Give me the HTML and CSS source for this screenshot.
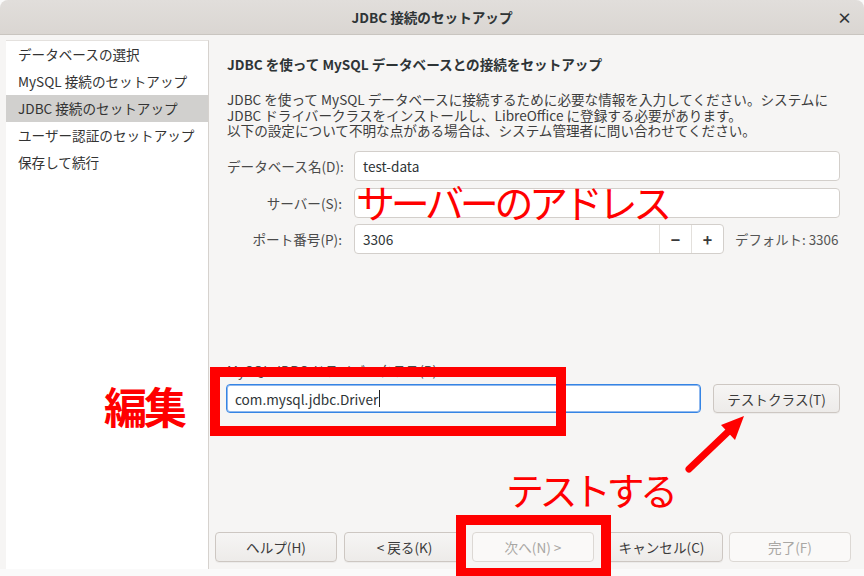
FILE: index.html
```html
<!DOCTYPE html>
<html lang="ja">
<head>
<meta charset="utf-8">
<title>JDBC 接続のセットアップ</title>
<link rel="stylesheet" href="styles.css">
</head>
<body>
<div class="window">
  <header class="titlebar">
    <span></span>
    <span class="title">JDBC 接続のセットアップ</span>
    <span class="close">×</span>
  </header>
  <div class="body">
    <nav class="sidebar">
      <div class="step">データベースの選択</div>
      <div class="step">MySQL 接続のセットアップ</div>
      <div class="step active">JDBC 接続のセットアップ</div>
      <div class="step">ユーザー認証のセットアップ</div>
      <div class="step">保存して続行</div>
    </nav>
    <main class="main">
      <h1 class="heading">JDBC を使って MySQL データベースとの接続をセットアップ</h1>
      <p class="desc">JDBC を使って MySQL データベースに接続するために必要な情報を入力してください。システムに<br>JDBC ドライバークラスをインストールし、LibreOffice に登録する必要があります。<br>以下の設定について不明な点がある場合は、システム管理者に問い合わせてください。</p>
      <div class="form">
        <label class="lbl">データベース名(D):</label>
        <div class="field">test-data</div>
        <label class="lbl">サーバー(S):</label>
        <div class="field"></div>
        <label class="lbl">ポート番号(P):</label>
        <div class="portrow">
          <div class="spin">
            <span class="spinval">3306</span>
            <span class="spinbtn">−</span>
            <span class="spinbtn">+</span>
          </div>
          <span class="default">デフォルト: 3306</span>
        </div>
      </div>
      <div class="driver">
        <div class="drvlabel">MySQL JDBC ドライバークラス(R):</div>
        <div class="drvrow">
          <div class="field focus">com.mysql.jdbc.Driver<span class="caret"></span></div>
          <button class="btn testbtn">テストクラス(T)</button>
        </div>
      </div>
      <div class="buttons">
        <button class="btn">ヘルプ(H)</button>
        <button class="btn">&lt; 戻る(K)</button>
        <button class="btn disabled">次へ(N) &gt;</button>
        <button class="btn">キャンセル(C)</button>
        <button class="btn disabled">完了(F)</button>
      </div>
    </main>
  </div>
</div>

<div class="note note-server">サーバーのアドレス</div>
<div class="note note-edit">編集</div>
<div class="note note-test">テストする</div>
<div class="redbox box-driver"></div>
<div class="redbox box-next"></div>
<svg class="arrow" width="864" height="576" viewBox="0 0 864 576">
  <line x1="689" y1="469" x2="731" y2="429" stroke="#ff0000" stroke-width="7" stroke-linecap="round"/>
  <polygon points="744,416 721,425 735,440" fill="#ff0000"/>
</svg>
</body>
</html>
```
FILE: styles.css
```css
* { box-sizing: border-box; }
html, body { margin: 0; padding: 0; }
body {
  width: 864px;
  height: 576px;
  overflow: hidden;
  background: #fafafa;
  font-family: "Noto Sans CJK JP", "Noto Sans", sans-serif;
  font-size: 13.6px;
  color: #2e3436;
  position: relative;
}
.window {
  width: 864px;
  height: 569px;
  background: #f6f5f4;
  border-radius: 8px 8px 0 0;
  display: flex;
  flex-direction: column;
  overflow: hidden;
}
.titlebar {
  height: 35px;
  flex: none;
  background: linear-gradient(#e1dedb, #dad6d2);
  border-bottom: 1px solid #c9c5c0;
  display: grid;
  grid-template-columns: 1fr auto 1fr;
  align-items: center;
}
.title {
  font-weight: bold;
  font-size: 13.6px;
  color: #2e3436;
}
.close {
  justify-self: end;
  margin-right: 12px;
  font-weight: bold;
  font-size: 15px;
  color: #2e3436;
}
.body {
  flex: 1;
  display: flex;
  padding: 5px 0 0 6px;
  min-height: 0;
}
.sidebar {
  width: 203px;
  flex: none;
  background: #ffffff;
  border-right: 1px solid #d6d2ce;
  border-top: 1px solid #e4e1de;
}
.step {
  height: 27px;
  line-height: 26px;
  padding-left: 12px;
  color: #333;
  white-space: nowrap;
}
.step.active { background: #d1d0ce; }
.main {
  flex: 1;
  min-width: 0;
  display: flex;
  flex-direction: column;
  padding: 0 0 0 18px;
}
.heading {
  margin: 15px 0 0;
  font-size: 13.6px;
  font-weight: bold;
  line-height: 18px;
  color: #2e3436;
}
.desc {
  margin: 19px 0 0;
  line-height: 15.5px;
  color: #3d3d3d;
  white-space: nowrap;
}
.form {
  margin: 12.5px 24px 0 0;
  display: grid;
  grid-template-columns: 115px minmax(0, 1fr);
  column-gap: 12px;
  row-gap: 6.5px;
}
.lbl {
  text-align: right;
  line-height: 30px;
  color: #4a4a4a;
  white-space: nowrap;
}
.field {
  height: 30px;
  background: #fff;
  border: 1px solid #d3cfcb;
  border-radius: 4px;
  padding: 0 8px;
  line-height: 28px;
  color: #2e3436;
  display: flex;
  align-items: center;
}
.portrow {
  display: flex;
  align-items: center;
  gap: 11px;
  min-width: 0;
}
.spin {
  width: 370px;
  flex: none;
  height: 30px;
  background: #fff;
  border: 1px solid #d3cfcb;
  border-radius: 4px;
  display: flex;
}
.spinval {
  flex: 1;
  padding-left: 8px;
  line-height: 28px;
}
.spinbtn {
  width: 32px;
  border-left: 1px solid #e3e0dc;
  text-align: center;
  line-height: 28px;
  font-size: 16px;
  font-weight: bold;
  color: #3a3a3a;
}
.default { color: #555; white-space: nowrap; font-size: 13.4px; }
.driver { margin-top: 108px; }
.drvlabel {
  line-height: 16px;
  color: #4a4a4a;
}
.drvrow {
  margin: 6px 24px 0 -1px;
  display: flex;
  gap: 12px;
}
.drvrow .field {
  flex: 1;
  min-width: 0;
  height: 29px;
  border: 1px solid #3584e4;
  box-shadow: inset 0 0 0 1px #8fb8ee;
}
.caret {
  display: inline-block;
  width: 1px;
  height: 17px;
  background: #222;
  margin-left: 1px;
}
.btn {
  font-family: inherit;
  font-size: 13.6px;
  color: #3a3a3a;
  background: linear-gradient(#f6f5f4, #edebe9);
  border: 1px solid #cdc7c2;
  border-radius: 4px;
  height: 30px;
  padding: 0;
  box-shadow: 0 1px 0 rgba(0,0,0,0.04);
}
.testbtn { width: 127px; flex: none; height: 29px; }
.buttons {
  margin: 119px 0 0 -12px;
  display: flex;
  gap: 6.5px;
}
.buttons .btn { width: 122px; flex: none; }
.btn.disabled {
  background: #faf9f8;
  color: #a9a7a4;
  border-color: #dcd8d4;
  box-shadow: none;
}
.note {
  position: absolute;
  color: #ff0000;
  white-space: nowrap;
  font-family: "Noto Sans CJK JP", sans-serif;
}
.note-server {
  left: 356px;
  top: 173px;
  font-size: 39px;
  letter-spacing: -4.3px;
  line-height: 56px;
}
.note-edit {
  left: 104px;
  top: 377px;
  font-size: 43px;
  font-weight: bold;
  letter-spacing: -3px;
  line-height: 56px;
}
.note-test {
  left: 506px;
  top: 461px;
  font-size: 38px;
  letter-spacing: -4.5px;
  line-height: 56px;
}
.redbox {
  position: absolute;
  border: 10px solid #ff0000;
}
.box-driver { left: 210px; top: 367px; width: 356px; height: 69px; }
.box-next { left: 456px; top: 515px; width: 155px; height: 63px; }
.arrow { position: absolute; left: 0; top: 0; pointer-events: none; }
```
